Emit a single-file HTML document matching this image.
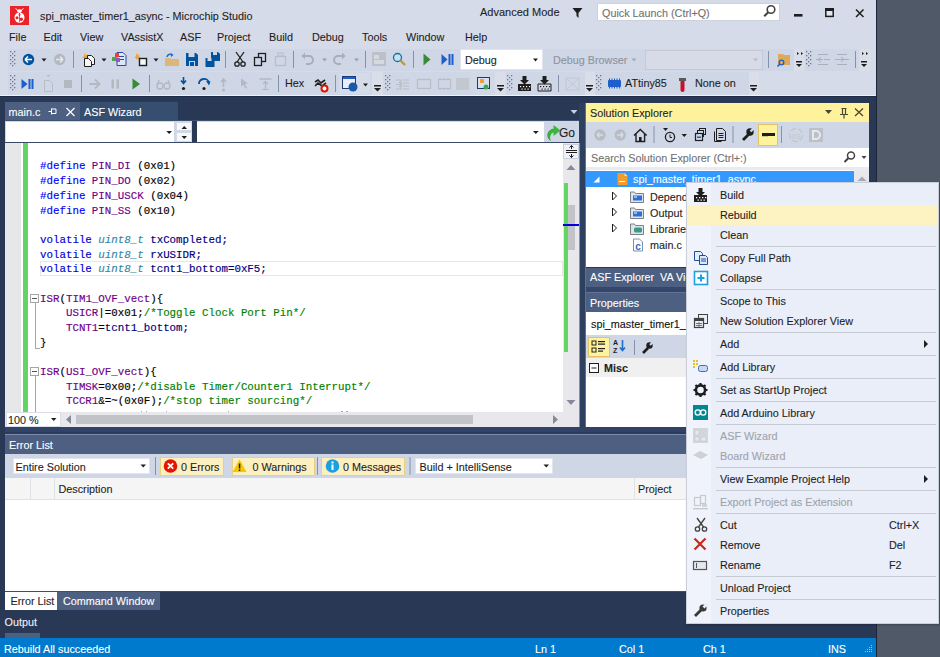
<!DOCTYPE html>
<html><head><meta charset="utf-8">
<style>
*{margin:0;padding:0;box-sizing:border-box}
html,body{width:940px;height:657px;overflow:hidden;background:#4f5967;font-family:"Liberation Sans",sans-serif;font-size:10.8px;color:#1e1e1e}
.a{position:absolute}
.t{position:absolute;white-space:nowrap;line-height:1;-webkit-text-stroke:0.1px}
.k{color:#0000ff}.m{color:#6f008a}.ty{color:#2f86a6;font-style:italic}.kv{color:#0000d8}.v{color:#000080}.c{color:#008000}
.mono{font-family:"Liberation Mono",monospace;font-size:10.8px;-webkit-text-stroke:0.15px}
</style></head><body>
<!-- window chrome -->
<div class="a" style="left:0;top:0;width:876px;height:657px;background:#d6dbe9"></div>
<div class="a" style="left:876px;top:0;width:1px;height:657px;background:#1c2638"></div>
<!-- title -->
<div class="t" style="left:40px;top:11px;font-size:10.8px;color:#1e1e1e">spi_master_timer1_async - Microchip Studio</div>
<div class="t" style="left:480px;top:6.5px;font-size:11px">Advanced Mode</div>
<div class="a" style="left:597px;top:3px;width:183px;height:18px;background:#fff;border:1px solid #cdd1db"></div>
<div class="t" style="left:602px;top:7.5px;color:#717171">Quick Launch (Ctrl+Q)</div>
<!-- menu -->
<div class="t" style="left:9px;top:32px">File</div>
<div class="t" style="left:43.5px;top:32px">Edit</div>
<div class="t" style="left:80px;top:32px">View</div>
<div class="t" style="left:121px;top:32px">VAssistX</div>
<div class="t" style="left:180px;top:32px">ASF</div>
<div class="t" style="left:217px;top:32px">Project</div>
<div class="t" style="left:269px;top:32px">Build</div>
<div class="t" style="left:312px;top:32px">Debug</div>
<div class="t" style="left:362px;top:32px">Tools</div>
<div class="t" style="left:406px;top:32px">Window</div>
<div class="t" style="left:465px;top:32px">Help</div>
<!-- toolbars -->
<svg class="a" style="left:0;top:0" width="940" height="100" viewBox="0 0 940 100">
<defs>
<pattern id="grip" width="4" height="4" patternUnits="userSpaceOnUse"><rect x="0" y="0" width="1" height="1" fill="#6c7689"/><rect x="2" y="2" width="1" height="1" fill="#6c7689"/></pattern>
</defs>
<!-- logo -->
<rect x="10" y="6" width="19" height="19" fill="#e8232a"/>
<ellipse cx="19.5" cy="17.5" rx="5" ry="5.2" fill="#fff"/>
<ellipse cx="19.5" cy="10.8" rx="2.6" ry="1.6" fill="#fff"/>
<circle cx="17" cy="17.8" r="1.5" fill="#e8232a"/><circle cx="21.3" cy="19.3" r="1.7" fill="#e8232a"/><circle cx="19.5" cy="14.8" r="1" fill="#e8232a"/><rect x="19.2" y="13" width=".8" height="9" fill="#e8232a"/>
<path d="M15.5 8.5 L17.5 10 M23.5 8.5 L21.5 10" stroke="#fff" stroke-width="1"/>
<!-- title buttons -->
<path d="M572.5 8 h10 l-4 5 v5 l-2 -2 v-3z" fill="#1e1e1e"/>
<rect x="794" y="14" width="8.5" height="2.6" fill="#1e1e1e"/>
<rect x="825.8" y="8.8" width="7.4" height="7.6" fill="#e4e7ef" stroke="#1e1e1e" stroke-width="1.5"/><rect x="825" y="8" width="9" height="3" fill="#1e1e1e"/>
<path d="M856 9.5 l7.5 7.5 M863.5 9.5 l-7.5 7.5" stroke="#1e1e1e" stroke-width="1.5"/>
<circle cx="771" cy="9.5" r="3.8" fill="none" stroke="#424242" stroke-width="1.6"/><path d="M768.2 12.3 l-4 4" stroke="#424242" stroke-width="2"/>
<!-- toolbar bands row1 -->
<rect x="8" y="49" width="786" height="22" fill="#cfd6e5"/>
<rect x="794" y="49" width="10" height="22" fill="#d9dee9"/>
<rect x="805" y="49" width="54" height="22" fill="#cfd6e5"/>
<rect x="859" y="49" width="12" height="22" fill="#d9dee9"/>
<!-- row2 -->
<rect x="8" y="72" width="364" height="23" fill="#cfd6e5"/>
<rect x="372" y="72" width="11" height="23" fill="#d9dee9"/>
<rect x="383" y="72" width="88" height="23" fill="#cfd6e5"/>
<rect x="471" y="72" width="24" height="23" fill="#d2d8e5"/>
<rect x="495" y="72" width="10" height="23" fill="#d9dee9"/>
<rect x="506" y="72" width="79" height="23" fill="#cfd6e5"/>
<rect x="585" y="72" width="10" height="23" fill="#d9dee9"/>
<rect x="595" y="72" width="154" height="23" fill="#cfd6e5"/>
<rect x="749" y="72" width="10" height="23" fill="#d9dee9"/>
<!-- grippers -->
<g fill="#6c7689"><rect x="10" y="51" width="1.3" height="1.3"/><rect x="14" y="51" width="1.3" height="1.3"/><rect x="12" y="53" width="1.3" height="1.3"/><rect x="10" y="55" width="1.3" height="1.3"/><rect x="14" y="55" width="1.3" height="1.3"/><rect x="12" y="57" width="1.3" height="1.3"/><rect x="10" y="59" width="1.3" height="1.3"/><rect x="14" y="59" width="1.3" height="1.3"/><rect x="12" y="61" width="1.3" height="1.3"/><rect x="10" y="63" width="1.3" height="1.3"/><rect x="14" y="63" width="1.3" height="1.3"/><rect x="12" y="65" width="1.3" height="1.3"/></g>
<g fill="#6c7689"><rect x="10" y="75" width="1.3" height="1.3"/><rect x="14" y="75" width="1.3" height="1.3"/><rect x="12" y="77" width="1.3" height="1.3"/><rect x="10" y="79" width="1.3" height="1.3"/><rect x="14" y="79" width="1.3" height="1.3"/><rect x="12" y="81" width="1.3" height="1.3"/><rect x="10" y="83" width="1.3" height="1.3"/><rect x="14" y="83" width="1.3" height="1.3"/><rect x="12" y="85" width="1.3" height="1.3"/><rect x="10" y="87" width="1.3" height="1.3"/><rect x="14" y="87" width="1.3" height="1.3"/><rect x="12" y="89" width="1.3" height="1.3"/></g>
<g fill="#6c7689"><rect x="385" y="75" width="1.3" height="1.3"/><rect x="389" y="75" width="1.3" height="1.3"/><rect x="387" y="77" width="1.3" height="1.3"/><rect x="385" y="79" width="1.3" height="1.3"/><rect x="389" y="79" width="1.3" height="1.3"/><rect x="387" y="81" width="1.3" height="1.3"/><rect x="385" y="83" width="1.3" height="1.3"/><rect x="389" y="83" width="1.3" height="1.3"/><rect x="387" y="85" width="1.3" height="1.3"/><rect x="385" y="87" width="1.3" height="1.3"/><rect x="389" y="87" width="1.3" height="1.3"/><rect x="387" y="89" width="1.3" height="1.3"/></g>
<g fill="#6c7689"><rect x="507" y="75" width="1.3" height="1.3"/><rect x="511" y="75" width="1.3" height="1.3"/><rect x="509" y="77" width="1.3" height="1.3"/><rect x="507" y="79" width="1.3" height="1.3"/><rect x="511" y="79" width="1.3" height="1.3"/><rect x="509" y="81" width="1.3" height="1.3"/><rect x="507" y="83" width="1.3" height="1.3"/><rect x="511" y="83" width="1.3" height="1.3"/><rect x="509" y="85" width="1.3" height="1.3"/><rect x="507" y="87" width="1.3" height="1.3"/><rect x="511" y="87" width="1.3" height="1.3"/><rect x="509" y="89" width="1.3" height="1.3"/></g>
<g fill="#6c7689"><rect x="596" y="75" width="1.3" height="1.3"/><rect x="600" y="75" width="1.3" height="1.3"/><rect x="598" y="77" width="1.3" height="1.3"/><rect x="596" y="79" width="1.3" height="1.3"/><rect x="600" y="79" width="1.3" height="1.3"/><rect x="598" y="81" width="1.3" height="1.3"/><rect x="596" y="83" width="1.3" height="1.3"/><rect x="600" y="83" width="1.3" height="1.3"/><rect x="598" y="85" width="1.3" height="1.3"/><rect x="596" y="87" width="1.3" height="1.3"/><rect x="600" y="87" width="1.3" height="1.3"/><rect x="598" y="89" width="1.3" height="1.3"/></g>
<g fill="#6c7689"><rect x="806" y="51" width="1.3" height="1.3"/><rect x="810" y="51" width="1.3" height="1.3"/><rect x="808" y="53" width="1.3" height="1.3"/><rect x="806" y="55" width="1.3" height="1.3"/><rect x="810" y="55" width="1.3" height="1.3"/><rect x="808" y="57" width="1.3" height="1.3"/><rect x="806" y="59" width="1.3" height="1.3"/><rect x="810" y="59" width="1.3" height="1.3"/><rect x="808" y="61" width="1.3" height="1.3"/><rect x="806" y="63" width="1.3" height="1.3"/><rect x="810" y="63" width="1.3" height="1.3"/><rect x="808" y="65" width="1.3" height="1.3"/></g>
<!-- separators -->
<g fill="#8592a8">
<rect x="73" y="51" width="1" height="17"/><rect x="225" y="51" width="1" height="17"/><rect x="293" y="51" width="1" height="17"/>
<rect x="365" y="51" width="1" height="17"/><rect x="413" y="51" width="1" height="17"/><rect x="768" y="51" width="1" height="17"/><rect x="855" y="51" width="1" height="17"/>
<rect x="81" y="75" width="1" height="17"/><rect x="149" y="75" width="1" height="17"/><rect x="278" y="75" width="1" height="17"/>
<rect x="335" y="75" width="1" height="17"/><rect x="558" y="75" width="1" height="17"/>
</g>
<!-- overflow glyphs -->
<g fill="#1e1e1e">
<path d="M797 52 l2 1.5 l-2 1.5z M801 52 l2 1.5 l-2 1.5z"/><rect x="796" y="61" width="6" height="1.5"/><path d="M796 64 h6 l-3 3z"/>
<path d="M862 52 l2 1.5 l-2 1.5z M866 52 l2 1.5 l-2 1.5z"/><rect x="861" y="61" width="6" height="1.5"/><path d="M861 64 h6 l-3 3z"/>
<rect x="374" y="85" width="7" height="1.5"/><path d="M374 88 h7 l-3.5 3.5z"/>
<rect x="497" y="85" width="7" height="1.5"/><path d="M497 88 h7 l-3.5 3.5z"/>
<rect x="586" y="85" width="7" height="1.5"/><path d="M586 88 h7 l-3.5 3.5z"/>
<rect x="750" y="85" width="7" height="1.5"/><path d="M750 88 h7 l-3.5 3.5z"/>
</g>
<!-- row1 icons -->
<circle cx="28.5" cy="59.5" r="5.7" fill="#00539c"/><path d="M25 59.5 h7 M25 59.5 l3 -3 M25 59.5 l3 3" stroke="#fff" stroke-width="1.5" fill="none"/>
<path d="M41.5 58.5 h5 l-2.5 3z" fill="#1e1e1e"/>
<circle cx="59.7" cy="59.5" r="5.7" fill="#b4b8c0"/><path d="M63 59.5 h-7 M63 59.5 l-3 -3 M63 59.5 l-3 3" stroke="#e6e8ec" stroke-width="1.5" fill="none"/>
<!-- new project -->
<path d="M84 53 l1.5 2 l2 -1 l-1 2 l2 1.5 l-2 .5 l.5 2 l-1.5 -1.2 l-1.5 1.2 l.3 -2 l-2 -.5 l2 -1.5z" fill="#f0a030"/>
<path d="M87.5 55.5 h4 l3 3 v6 h-7z" fill="#f6f6f6" stroke="#1e1e1e"/><path d="M84.5 58.5 h4 l3 3 v5 h-7z" fill="#f6f6f6" stroke="#1e1e1e"/>
<path d="M101.5 58.5 h5 l-2.5 3z" fill="#1e1e1e"/>
<!-- add item -->
<path d="M117 52.5 h6 l3 3 v10 h-9z" fill="#dde6f5" stroke="#2a4a9a"/><rect x="118" y="56" width="6" height="1" fill="#2a4a9a"/><rect x="118" y="59" width="6" height="1" fill="#2a4a9a"/>
<rect x="115" y="53" width="4" height="4" fill="#e8433a"/><rect x="112" y="57" width="4" height="4" fill="#4aa84a"/><rect x="116" y="58" width="4" height="4" fill="#9a52c8"/>
<!-- new file -->
<path d="M136 53 l1.5 2 l2 -1 l-1 2 l2 1.5 l-2 .5 l.5 2 l-1.5 -1.2 l-1.5 1.2 l.3 -2 l-2 -.5 l2 -1.5z" fill="#f0a030"/>
<rect x="139.5" y="58.5" width="7" height="7" fill="#f6f6f6" stroke="#1e1e1e" stroke-width="1.4"/>
<path d="M153.5 58.5 h5 l-2.5 3z" fill="#1e1e1e"/>
<!-- open -->
<path d="M165 58 h5 l1 1 h8 v7 h-14z" fill="#dcb67a"/><path d="M167 57 a3 3 0 0 1 5 -2" stroke="#1c6dcc" stroke-width="1.5" fill="none"/><path d="M171 53 l2.5 2 l-2.5 2z" fill="#1c6dcc"/>
<!-- save -->
<path d="M186 53 h10 l2 2 v11 h-12z" fill="#00539c"/><rect x="188.5" y="53" width="6" height="4" fill="#cfd6e5"/><rect x="189" y="61" width="6" height="5" fill="#cfd6e5"/><rect x="190" y="62" width="4" height="4" fill="#00539c"/>
<!-- save all -->
<path d="M211 52 h7 l2 2 v7 h-9z" fill="#00539c"/><rect x="213" y="52" width="4" height="3" fill="#cfd6e5"/>
<path d="M205.5 58 h7 l2 2 v7 h-9z" fill="#00539c"/><rect x="207.5" y="58" width="4" height="3" fill="#cfd6e5"/>
<!-- cut -->
<path d="M236 52 l7 10 M244 52 l-7 10" stroke="#1e1e1e" stroke-width="1.3"/><circle cx="237" cy="64" r="2.2" fill="none" stroke="#1e1e1e" stroke-width="1.3"/><circle cx="243" cy="64" r="2.2" fill="none" stroke="#1e1e1e" stroke-width="1.3"/>
<!-- copy -->
<rect x="258.5" y="53.5" width="7" height="8" fill="none" stroke="#1e1e1e" stroke-width="1.3"/><rect x="254.5" y="57.5" width="7" height="8" fill="#cfd6e5" stroke="#1e1e1e" stroke-width="1.3"/>
<!-- paste disabled -->
<rect x="275.5" y="56.5" width="10" height="9" fill="none" stroke="#b9bdc5" stroke-width="1.3"/><rect x="278" y="53" width="5" height="3" fill="none" stroke="#b9bdc5"/>
<!-- undo/redo disabled -->
<path d="M304 56 h5 a4 4 0 0 1 0 8 h-3" stroke="#a9aeb8" stroke-width="2" fill="none"/><path d="M301.5 56 l3.5 -3.5 v7z" fill="#a9aeb8"/>
<path d="M322 58.5 h5 l-2.5 3z" fill="#9aa0aa"/>
<path d="M343 56 h-5 a4 4 0 0 0 0 8 h3" stroke="#a9aeb8" stroke-width="2" fill="none"/><path d="M345.5 56 l-3.5 -3.5 v7z" fill="#a9aeb8"/>
<path d="M354 58.5 h5 l-2.5 3z" fill="#9aa0aa"/>
<!-- gray box -->
<rect x="372" y="52" width="14" height="14" fill="#bcc1c9"/><rect x="374" y="55" width="5" height="4" fill="#d5d9e0"/><rect x="374" y="60" width="10" height="4" fill="#d5d9e0"/>
<!-- find -->
<circle cx="397.5" cy="57.5" r="4" fill="#bfe4f2" stroke="#1e6f9a" stroke-width="1.3"/><path d="M400.5 60.5 l4.5 4.5" stroke="#c8962a" stroke-width="2.4"/>
<!-- play/continue -->
<path d="M423.5 53.5 l7 6 l-7 6z" fill="#388a34"/>
<path d="M441.5 54 l6 5.5 l-6 5.5z" fill="#1c5fcc"/><rect x="448.5" y="54" width="2" height="11" fill="#1c5fcc"/><rect x="451.5" y="54" width="2" height="11" fill="#1c5fcc"/>
<!-- Debug combo -->
<rect x="460.5" y="49.5" width="82" height="20" fill="#fff" stroke="#e0e4ec"/>
<path d="M533 58.5 h5 l-2.5 3z" fill="#1e1e1e"/>
<path d="M631.5 58.5 h5 l-2.5 3z" fill="#a4a9b3"/>
<rect x="645.5" y="50.5" width="117" height="19" fill="#d6dbe7" stroke="#c3c9d6"/>
<path d="M753 58.5 h5 l-2.5 3z" fill="#b8bdc6"/>
<!-- find in files -->
<path d="M778 54 h5 l1 1 h6 v10 h-12z" fill="#dcaa5a"/><circle cx="781.5" cy="62.5" r="2.3" fill="none" stroke="#1c5fcc" stroke-width="1.3"/><path d="M780 64 l-2.5 2.5" stroke="#1c5fcc" stroke-width="1.6"/>
<!-- indent -->
<g stroke="#aab0ba" stroke-width="1"><path d="M818 54.5 h10 M816 59.5 h4 M824 59.5 h6 M818 64.5 h10"/><path d="M823 59.5 h-5 M821 57 l-3 2.5 l3 2.5" fill="none"/>
<path d="M837 54.5 h10 M835 59.5 h4 M843 59.5 h6 M837 64.5 h10"/><path d="M838 59.5 h5 M841 57 l3 2.5 l-3 2.5" fill="none"/></g>
<!-- row2 icons -->
<path d="M21.5 79 l6 5 l-6 5z" fill="#1c5fcc"/><rect x="28.5" y="79" width="2" height="10" fill="#1c5fcc"/><rect x="31.5" y="79" width="2" height="10" fill="#1c5fcc"/>
<path d="M44.5 80.5 h5 l3 3 v8 h-8z" fill="none" stroke="#b9bdc5"/><path d="M46 75 h5 l-2.5 2z" fill="#b9bdc5"/>
<rect x="64" y="80" width="8" height="8" fill="#b4b8c0"/>
<path d="M89.5 84 h10 M95 79.5 l4.5 4.5 l-4.5 4.5" stroke="#b4b8c0" stroke-width="1.8" fill="none"/>
<rect x="111.5" y="79.5" width="2.5" height="9" fill="#b4b8c0"/><rect x="116.5" y="79.5" width="2.5" height="9" fill="#b4b8c0"/>
<path d="M132.5 78.5 l7.5 5.5 l-7.5 5.5z" fill="#388a34"/>
<g fill="none" stroke="#b4b8c0" stroke-width="1.3"><circle cx="160" cy="86" r="3"/><circle cx="167" cy="86" r="3"/><path d="M157 85 l2 -5 M170 85 l-2 -5"/></g>
<path d="M183.5 77 v6 M181 80.5 l2.5 3 l2.5 -3" stroke="#00539c" stroke-width="1.6" fill="none"/><circle cx="183.5" cy="88.5" r="1.6" fill="#1e1e1e"/>
<path d="M199 84 a5 4.5 0 0 1 10 -1" stroke="#00539c" stroke-width="1.8" fill="none"/><path d="M206 81 l4.5 .5 l-1.5 4z" fill="#00539c"/><circle cx="204" cy="88.5" r="1.6" fill="#1e1e1e"/>
<path d="M223.5 87 v-7 M221 82 l2.5 -3 l2.5 3" stroke="#b4b8c0" stroke-width="1.6" fill="none"/><circle cx="223.5" cy="90" r="1.5" fill="#b4b8c0"/>
<path d="M241 78.5 l7 5 l-3 .5 l2 4 l-1.5 .7 l-2 -4 l-2.5 2z" fill="#b4b8c0"/>
<path d="M259.5 79 h12 M265.5 89 v-7 M263 84 l2.5 -2.5 l2.5 2.5" stroke="#b4b8c0" stroke-width="1.3" fill="none"/><rect x="262" y="89" width="7" height="1" fill="#b4b8c0"/>
<!-- breakpoint -->
<path d="M315 82 l3 -2 l3 3 l4 -3 M315 86 l3 -3 l4 3 l4 -3" stroke="#1e1e1e" stroke-width="1.6" fill="none"/><circle cx="324.5" cy="88.5" r="3" fill="#fff" stroke="#e51400" stroke-width="2"/>
<!-- window icon -->
<rect x="339" y="73" width="31" height="21" fill="#d6dbe9"/>
<rect x="342.5" y="76.5" width="13" height="12" fill="#e8eef8" stroke="#1e3a6e"/><rect x="343" y="77" width="12" height="2" fill="#1c5fcc"/><circle cx="353" cy="87" r="4.5" fill="#1a5aa8"/>
<path d="M363 83.5 h5 l-2.5 3z" fill="#1e1e1e"/>
<!-- disabled icons -->
<g fill="none" stroke="#b9bdc5" stroke-width="1.2">
<path d="M396 80 h5 v9 h-5 M396 84.5 h6 M399 82 l3 2.5 l-3 2.5 M403 80 h6 M403 83 h6 M403 86 h6 M403 89 h6"/>
<rect x="417.5" y="79.5" width="13" height="9"/>
<rect x="438.5" y="79.5" width="12" height="9"/><path d="M440 78 v2 M444 78 v2 M448 78 v2 M440 88 v2 M444 88 v2 M448 88 v2"/>
</g>
<rect x="456" y="78" width="13" height="12" fill="#c3c8d0"/>
<rect x="477.5" y="77.5" width="12" height="11" fill="#d5e1f2" stroke="#1e3a6e"/><rect x="480" y="79" width="4" height="4" fill="#f0a030"/><circle cx="486" cy="87" r="2.5" fill="#3aa84a"/>
<!-- program -->
<g fill="#1e1e1e"><path d="M518 84 h13 v7 h-13z"/><path d="M522.5 76 h4 v4 h2.5 l-4.5 4.5 l-4.5 -4.5 h2.5z"/></g>
<g fill="#fff"><rect x="520" y="86" width="1.2" height="1.2"/><rect x="523" y="86" width="1.2" height="1.2"/><rect x="526" y="86" width="1.2" height="1.2"/><rect x="529" y="86" width="1.2" height="1.2"/><rect x="521.5" y="88.5" width="1.2" height="1.2"/><rect x="524.5" y="88.5" width="1.2" height="1.2"/><rect x="527.5" y="88.5" width="1.2" height="1.2"/></g>
<g fill="#1e1e1e"><path d="M538 84 h13 v7 h-13z" fill="none" stroke="#1e1e1e"/><path d="M542.5 76 h4 v4 h2.5 l-4.5 4.5 l-4.5 -4.5 h2.5z"/></g>
<g fill="#1e1e1e"><rect x="540" y="86" width="1.2" height="1.2"/><rect x="543" y="86" width="1.2" height="1.2"/><rect x="546" y="86" width="1.2" height="1.2"/><rect x="549" y="86" width="1.2" height="1.2"/><rect x="541.5" y="88.5" width="1.2" height="1.2"/><rect x="544.5" y="88.5" width="1.2" height="1.2"/><rect x="547.5" y="88.5" width="1.2" height="1.2"/></g>
<rect x="566" y="78" width="13" height="12" fill="none" stroke="#c3c8d0"/><path d="M567 79 l11 10 M578 79 l-11 10" stroke="#c3c8d0"/>
<!-- chip -->
<rect x="608" y="80" width="13" height="7" rx="1" fill="#1c5fcc"/><g fill="#1c5fcc"><rect x="609" y="78.5" width="1" height="10"/><rect x="611.5" y="78.5" width="1" height="10"/><rect x="614" y="78.5" width="1" height="10"/><rect x="616.5" y="78.5" width="1" height="10"/><rect x="619" y="78.5" width="1" height="10"/></g>
<!-- tool icon -->
<path d="M679 78 h7 v3 h-7z" fill="#5a5a5a"/><path d="M680.5 81 h4 v9 a2 2 0 0 1 -4 0z" fill="#c8102e"/>
</svg>
<div class="t" style="left:465px;top:54.5px">Debug</div>
<div class="t" style="left:553px;top:54.5px;color:#8d939e">Debug Browser</div>
<div class="t" style="left:285px;top:78px">Hex</div>
<div class="t" style="left:625px;top:78px">ATtiny85</div>
<div class="t" style="left:695px;top:78px">None on</div>
<!-- dark env -->
<div class="a" style="left:0;top:96px;width:876px;height:542px;background:#293955"></div>
<!-- status bar -->
<div class="a" style="left:0;top:638px;width:876px;height:19px;background:#007acc"></div>
<div class="t" style="left:4px;top:644px;color:#fff">Rebuild All succeeded</div>
<div class="t" style="left:535px;top:644px;color:#fff">Ln 1</div>
<div class="t" style="left:619px;top:644px;color:#fff">Col 1</div>
<div class="t" style="left:703px;top:644px;color:#fff">Ch 1</div>
<div class="t" style="left:828px;top:644px;color:#fff">INS</div>
<svg class="a" style="left:0;top:0" width="940" height="657"><g fill="#9fc8ea"><rect x="871" y="645" width="1" height="1"/><rect x="869" y="647" width="1" height="1"/><rect x="871" y="647" width="1" height="1"/><rect x="867" y="649" width="1" height="1"/><rect x="869" y="649" width="1" height="1"/><rect x="871" y="649" width="1" height="1"/><rect x="865" y="651" width="1" height="1"/><rect x="867" y="651" width="1" height="1"/><rect x="869" y="651" width="1" height="1"/><rect x="871" y="651" width="1" height="1"/></g></svg>
<!-- doc tabs -->
<div class="a" style="left:0;top:95px;width:876px;height:1px;background:#eef1f9"></div><div class="a" style="left:0;top:96px;width:876px;height:1px;background:#1f2c48"></div>
<div class="a" style="left:5px;top:102px;width:75px;height:18px;background:#4d6082"></div>
<div class="t" style="left:8.5px;top:107px;color:#fff">main.c</div>
<div class="a" style="left:80px;top:102px;width:98px;height:18px;background:#364e6f"></div>
<div class="t" style="left:84px;top:107px;color:#fff">ASF Wizard</div>
<div class="a" style="left:5px;top:120px;width:574px;height:1px;background:#3e5272"></div>
<!-- nav bar -->
<div class="a" style="left:5px;top:121px;width:574px;height:21px;background:#cfd6e5"></div>
<div class="a" style="left:6px;top:122px;width:168px;height:19.5px;background:#fff"></div>
<div class="a" style="left:176px;top:122px;width:15.5px;height:9px;background:#f6f8fc;border:1px solid #d3d9e6"></div>
<div class="a" style="left:176px;top:131.5px;width:15.5px;height:10px;background:#f6f8fc;border:1px solid #d3d9e6"></div>
<div class="a" style="left:192px;top:121px;width:4.5px;height:22px;background:#293955"></div>
<div class="a" style="left:197px;top:122px;width:347px;height:19.5px;background:#fff"></div>
<div class="a" style="left:5px;top:141.5px;width:574px;height:1.5px;background:#3a4a66"></div>
<div class="t" style="left:559px;top:126.5px;font-size:12px;color:#1e1e1e">Go</div>
<svg class="a" style="left:0;top:0" width="940" height="200">
<path d="M570.5 110 h7 l-3.5 4z" fill="#c9d0dd"/>
<path d="M48.5 111.5 h3 M51.5 108.5 v6 M51.5 109 h4.5 v4.5 h-4.5" stroke="#fff" fill="none"/>
<path d="M66.5 108 l8 8 M74.5 108 l-8 8" stroke="#fff" stroke-width="1.2"/>
<path d="M166.3 131 h5.7 l-2.85 3z" fill="#1e1e1e"/>
<path d="M181.5 129 h5.5 l-2.75 -3z" fill="#1e1e1e"/>
<path d="M181.5 136 h5.5 l-2.75 3z" fill="#1e1e1e"/>
<path d="M533 131 h5.7 l-2.85 3z" fill="#1e1e1e"/>
<path d="M550.5 140.5 c-4 -3 -4 -10 3 -11.5 v-4 l7 5.5 l-7 5.5 v-3.5 c-3 1 -4 4 -3 8z" fill="#3cb53c"/><path d="M550.5 140.5 c-4 -3 -4 -10 3 -11.5" stroke="#2a8f2a" fill="none" stroke-width=".8"/>

</svg>
<!-- editor -->
<div class="a" style="left:5px;top:143px;width:574px;height:284px;background:#fff"></div>
<div class="a" style="left:5px;top:143px;width:16px;height:269px;background:#e6e7e8"></div>
<div class="a" style="left:23px;top:143px;width:5px;height:269px;background:#63d563"></div>
<div class="a" style="left:40px;top:261px;width:523px;height:15px;border:1px solid #e6e6e6"></div>
<div class="a" style="left:30px;top:294px;width:9px;height:9px;border:1px solid #a5a5a5;background:#fff"></div>
<div class="a" style="left:32px;top:298px;width:5px;height:1px;background:#555"></div>
<div class="a" style="left:35px;top:303px;width:1px;height:46px;background:#a5a5a5"></div>
<div class="a" style="left:35px;top:348px;width:5px;height:1px;background:#a5a5a5"></div>
<div class="a" style="left:30px;top:367px;width:9px;height:9px;border:1px solid #a5a5a5;background:#fff"></div>
<div class="a" style="left:32px;top:371px;width:5px;height:1px;background:#555"></div>
<div class="a" style="left:35px;top:376px;width:1px;height:36px;background:#a5a5a5"></div>
<div class="a" style="left:32px;top:143px;width:531px;height:269px;overflow:hidden">
<pre class="mono" id="code" style="position:absolute;left:8px;top:1.8px;line-height:14.69px;color:#000">

<span class="k">#define</span> <span class="m">PIN_DI</span> (0x01)
<span class="k">#define</span> <span class="m">PIN_DO</span> (0x02)
<span class="k">#define</span> <span class="m">PIN_USCK</span> (0x04)
<span class="k">#define</span> <span class="m">PIN_SS</span> (0x10)

<span class="kv">volatile</span> <span class="ty">uint8_t</span> <span class="v">txCompleted;</span>
<span class="kv">volatile</span> <span class="ty">uint8_t</span> <span class="v">rxUSIDR;</span>
<span class="kv">volatile</span> <span class="ty">uint8_t</span> <span class="v">tcnt1_bottom=0xF5;</span>

<span class="m">ISR</span>(<span class="m">TIM1_OVF_vect</span>){
    <span class="m">USICR</span>|=0x01;<span class="c">/*Toggle Clock Port Pin*/</span>
    <span class="m">TCNT1</span>=<span class="v">tcnt1_bottom;</span>
}

<span class="m">ISR</span>(<span class="m">USI_OVF_vect</span>){
    <span class="m">TIMSK</span>=0x00;<span class="c">/*disable Timer/Counter1 Interrupt*/</span>
    <span class="m">TCCR1</span>&amp;=~(0x0F);<span class="c">/*stop timer sourcing*/</span>
</pre></div>
<div class="a" style="left:563px;top:143px;width:16px;height:269px;background:#e8e8ec"></div>
<div class="a" style="left:563px;top:144px;width:16px;height:15px;background:#eef1f8;border:1px solid #c9d0dc"></div>
<svg class="a" style="left:0;top:0" width="940" height="200"><path d="M566 150.5 h11 M566 152.5 h11" stroke="#1e1e1e"/><path d="M571.5 145.5 v3.5 M571.5 154 v3.5 M569.5 147.5 l2 -2 l2 2 M569.5 155.5 l2 2 l2 -2" stroke="#1e1e1e" fill="none"/></svg>
<div class="a" style="left:564px;top:183px;width:4px;height:169px;background:#63d563"></div>
<div class="a" style="left:568px;top:205px;width:7px;height:45px;background:#c2c3c9"></div>
<div class="a" style="left:563px;top:224px;width:16px;height:2px;background:#0000dd"></div>
<div class="a" style="left:5px;top:412px;width:574px;height:15px;background:#e8e8ec"></div>
<div class="a" style="left:6px;top:412px;width:55px;height:15px;background:#fff;border:1px solid #dadde6"></div>
<div class="t" style="left:8px;top:415px;font-size:10.8px">100 %</div>
<svg class="a" style="left:0;top:0" width="940" height="657">
<path d="M51 418 h5.5 l-2.75 3z" fill="#1e1e1e"/>
<path d="M71 415 v9 l-5 -4.5z" fill="#868999"/>
<path d="M553 415 v9 l5 -4.5z" fill="#868999"/>
<path d="M566.5 170 h9 l-4.5 -5z" fill="#868999"/>
<path d="M566.5 400 h9 l-4.5 5z" fill="#868999"/>
<g fill="#7fc88a"><rect x="141" y="411" width="1" height="1"/><rect x="146" y="411" width="1" height="1"/><rect x="166" y="411" width="1" height="1"/><rect x="228" y="411" width="1" height="1"/><rect x="341" y="411" width="2" height="1"/><rect x="346" y="411" width="2" height="1"/></g>
</svg>
<div class="a" style="left:76px;top:415px;width:397px;height:9px;background:#c2c3c9"></div>

<!-- splitters -->
<div class="a" style="left:579px;top:103px;width:7px;height:325px;background:#2e405f"></div>
<div class="a" style="left:579px;top:143px;width:1px;height:285px;background:#7f8fb0"></div>
<div class="a" style="left:585px;top:103px;width:1px;height:325px;background:#5f7096"></div>
<div class="a" style="left:5px;top:427px;width:864px;height:5px;background:#304366"></div>
<div class="a" style="left:5px;top:432px;width:864px;height:2px;background:#2b3b5a"></div>
<div class="a" style="left:5px;top:434px;width:864px;height:1px;background:#7c8db0"></div>
<!-- solution explorer -->
<div class="a" style="left:586px;top:103px;width:283px;height:19px;background:#fff29d"></div>
<div class="t" style="left:590px;top:107.5px">Solution Explorer</div>
<div class="a" style="left:586px;top:122px;width:283px;height:26px;background:#cfd6e5"></div>
<div class="a" style="left:758px;top:124px;width:20px;height:22px;background:#fff29d;border:1px solid #e5c365"></div>
<div class="a" style="left:586px;top:148px;width:283px;height:19px;background:#fff"></div>
<div class="t" style="left:591px;top:152.5px;color:#717171">Search Solution Explorer (Ctrl+:)</div>
<div class="a" style="left:586px;top:167px;width:283px;height:3px;background:#e8ebf2"></div>
<div class="a" style="left:586px;top:170px;width:283px;height:97px;background:#fff"></div>
<div class="a" style="left:586px;top:171px;width:268px;height:16px;background:#3399ff"></div>
<div class="a" style="left:854px;top:170px;width:15px;height:97px;background:#e8e8ec"></div>
<div class="t" style="left:633px;top:174px;color:#fff">spi_master_timer1_async</div>
<div class="t" style="left:650px;top:191.5px">Dependencies</div>
<div class="t" style="left:650px;top:207.7px">Output Files</div>
<div class="t" style="left:650px;top:224px">Libraries</div>
<div class="t" style="left:650px;top:240.3px">main.c</div>
<!-- ASF explorer tabs -->
<div class="a" style="left:586px;top:286px;width:283px;height:6px;background:#34476a"></div>
<div class="a" style="left:586px;top:268px;width:283px;height:18.5px;background:#4d6082"></div>
<div class="t" style="left:590px;top:272.3px;color:#fff">ASF Explorer</div>
<div class="t" style="left:660px;top:272.3px;color:#fff">VA View</div>
<!-- properties -->
<div class="a" style="left:586px;top:292px;width:283px;height:20px;background:#4d6082;border-top:1px solid #62739a"></div>
<div class="t" style="left:590px;top:298px;color:#fff">Properties</div>
<div class="a" style="left:586px;top:312px;width:283px;height:115px;background:#fff"></div>
<div class="t" style="left:591px;top:318.5px;color:#111">spi_master_timer1_async&nbsp; Project Properties</div>
<div class="a" style="left:586px;top:335px;width:283px;height:23px;background:#cfd6e5"></div>
<div class="a" style="left:588px;top:337px;width:22px;height:20px;background:#fff29d;border:1px solid #e5c365"></div>
<div class="a" style="left:586px;top:358px;width:283px;height:19px;background:#f0f0f0"></div>
<div class="t" style="left:604px;top:363px;font-weight:bold">Misc</div>
<svg class="a" style="left:0;top:0" width="940" height="657">
<path d="M825 110 h7 l-3.5 4z" fill="#4a4733"/>
<path d="M841.5 108.5 h5 M842.5 108.5 v6 M845.5 108.5 v6 M840 114.5 h8 M844 114.5 v4" stroke="#4a4733" stroke-width="1.2" fill="none"/>
<path d="M855 108.5 l8 7.5 M863 108.5 l-8 7.5" stroke="#4a4733" stroke-width="1.3"/>
<circle cx="600" cy="135" r="5.7" fill="#b8bcc4"/><path d="M597 135 h6 M597 135 l2.5 -2.5 M597 135 l2.5 2.5" stroke="#d9dde5" stroke-width="1.3" fill="none"/>
<circle cx="620.3" cy="135" r="5.7" fill="#b8bcc4"/><path d="M623.3 135 h-6 M623.3 135 l-2.5 -2.5 M623.3 135 l-2.5 2.5" stroke="#d9dde5" stroke-width="1.3" fill="none"/>
<path d="M634 135.5 l6.3 -6 l6.3 6 M636 134 v7.5 h8.6 v-7.5" stroke="#1e1e1e" stroke-width="1.4" fill="none"/><rect x="639" y="137" width="2.6" height="4.5" fill="#1e1e1e"/>
<rect x="653.5" y="126" width="1" height="17" fill="#8592a8"/>
<circle cx="670" cy="137" r="4.6" fill="none" stroke="#1e1e1e" stroke-width="1.3"/><path d="M670 134.5 v3 h2" stroke="#1e1e1e" fill="none"/><path d="M663 128 h5 l-2.5 3z" fill="#1e1e1e"/>
<path d="M681.5 134 h5.5 l-2.75 3z" fill="#1e1e1e"/>
<rect x="699.5" y="128.5" width="6" height="6" fill="none" stroke="#1e1e1e"/><rect x="697.5" y="130.5" width="6" height="6" fill="#cfd6e5" stroke="#1e1e1e"/><rect x="695.5" y="133.5" width="7" height="7" fill="#cfd6e5" stroke="#1e1e1e" stroke-width="1.2"/><rect x="697" y="136.5" width="4" height="1.5" fill="#1c5fcc"/>
<path d="M716.5 128.5 h6 l3 3 v9 h-9z" fill="#cfd6e5" stroke="#1e1e1e"/><path d="M714.5 131.5 v10 h7" stroke="#1e1e1e" fill="none"/><path d="M718.5 133.5 h5 M718.5 135.5 h5 M718.5 137.5 h5" stroke="#1e1e1e"/>
<rect x="732.5" y="126" width="1" height="17" fill="#8592a8"/>
<path d="M743 140 l6 -6" stroke="#1e1e1e" stroke-width="2.8"/><circle cx="750" cy="132" r="3.7" fill="#1e1e1e"/><path d="M750.5 131.5 l4 -4" stroke="#cfd6e5" stroke-width="2.4"/>
<rect x="762" y="133" width="13" height="3" fill="#1e1e1e"/><rect x="762" y="135" width="6" height="1.2" fill="#1e1e1e"/>
<rect x="781" y="126" width="1" height="17" fill="#8592a8"/>
<circle cx="796" cy="135" r="6.5" fill="none" stroke="#c4c8cf" stroke-width="1.4" stroke-dasharray="6 2"/><text x="791" y="139" font-size="8" fill="#c4c8cf" font-family="Liberation Sans">4S</text>
<rect x="809" y="128" width="14" height="14" fill="#bcc0c8"/><path d="M812 130 h4 a5 5 0 0 1 0 10 h-4z" fill="#e6e8ec"/><path d="M814 132 h2 a3 3 0 0 1 0 6 h-2z" fill="#bcc0c8"/>
<circle cx="851" cy="155.5" r="3.5" fill="none" stroke="#424242" stroke-width="1.5"/><path d="M848.5 158 l-4 4" stroke="#424242" stroke-width="2"/>
<path d="M861.5 156 h5 l-2.5 3z" fill="#424242"/>
<path d="M862 176.5 l-4.5 4.5 h9z" fill="#a6a9b0"/>
<!-- tree -->
<path d="M599.5 176.5 v6 h-6z" fill="#fff"/>
<path d="M617.5 173 h7 l3 3 v9 h-10z" fill="#f39c2c"/><path d="M624.5 173 v3 h3" fill="#fcd9a8"/><rect x="619" y="181" width="6" height="1" fill="#fff"/>
<g transform="translate(0,1.5)"><path d="M612.5 190.5 l4 4 l-4 4z" fill="#fff" stroke="#1e1e1e"/>
<path d="M612.5 206.5 l4 4 l-4 4z" fill="#fff" stroke="#1e1e1e"/>
<path d="M612.5 222.5 l4 4 l-4 4z" fill="#fff" stroke="#1e1e1e"/>
<g>
<path d="M630.5 190.5 h4 l1 1.5 h8 v9 h-13z" fill="#dfe3ea" stroke="#7a7f88"/><rect x="633" y="194" width="9" height="5" fill="#2d6fd2"/><rect x="634" y="195" width="3" height="1" fill="#fff"/>
<path d="M630.5 206.5 h4 l1 1.5 h8 v9 h-13z" fill="#dfe3ea" stroke="#7a7f88"/><rect x="633" y="210" width="9" height="5" fill="#2d6fd2"/><rect x="634" y="211" width="3" height="1" fill="#fff"/>
<path d="M630.5 222.5 h4 l1 1.5 h8 v9 h-13z" fill="#dfe3ea" stroke="#7a7f88"/><rect x="634" y="226" width="8" height="5" rx="1.5" fill="#3a9a8a"/>
</g>
<path d="M633.5 237.5 h6 l3 3 v9 h-9z" fill="#fff" stroke="#7a8fb0"/><text x="635.2" y="248.5" font-size="10" font-weight="bold" fill="#2a6fc9" font-family="Liberation Sans">c</text>
</g>
<!-- properties toolbar -->
<g fill="#1e1e1e"><rect x="592" y="341" width="4" height="4" fill="none" stroke="#1e1e1e"/><rect x="592" y="348" width="4" height="4" fill="none" stroke="#1e1e1e"/><rect x="598" y="341" width="7" height="1.2"/><rect x="598" y="343.5" width="7" height="1.2"/><rect x="598" y="348" width="7" height="1.2"/><rect x="598" y="350.5" width="5" height="1.2"/></g>
<text x="613" y="345" font-size="7" font-weight="bold" fill="#1e1e1e" font-family="Liberation Sans">A</text><text x="613" y="353" font-size="7" font-weight="bold" fill="#1e1e1e" font-family="Liberation Sans">Z</text>
<path d="M622.5 340 v10 M620 347.5 l2.5 3 l2.5 -3" stroke="#1c6dcc" stroke-width="1.6" fill="none"/>
<rect x="634" y="340" width="1" height="15" fill="#8592a8"/>
<path d="M643 353 l5 -5" stroke="#1e1e1e" stroke-width="2.6"/><circle cx="649.5" cy="345.5" r="3.2" fill="#1e1e1e"/><path d="M650 345 l3.5 -3.5" stroke="#cfd6e5" stroke-width="2.2"/>
<rect x="589.5" y="363.5" width="9" height="9" fill="#fff" stroke="#1e1e1e"/><rect x="591.5" y="367.5" width="5" height="1" fill="#1e1e1e"/>
</svg>
<!-- error list -->
<div class="a" style="left:5px;top:435px;width:864px;height:19px;background:#4d6082"></div>
<div class="t" style="left:9px;top:439.5px;color:#fff">Error List</div>
<div class="a" style="left:5px;top:454px;width:864px;height:24px;background:#cfd6e5"></div>
<div class="a" style="left:12.5px;top:458px;width:137px;height:16px;background:#fff;border:1px solid #e2e5ec"></div>
<div class="t" style="left:15.5px;top:461.5px">Entire Solution</div>
<div class="a" style="left:160px;top:456.5px;width:64px;height:19.5px;background:#fdf0c0;border:1px solid #e8cf83"></div>
<div class="t" style="left:181px;top:461.5px">0 Errors</div>
<div class="a" style="left:231.5px;top:456.5px;width:83px;height:19.5px;background:#fdf0c0;border:1px solid #e8cf83"></div>
<div class="t" style="left:252.5px;top:461.5px">0 Warnings</div>
<div class="a" style="left:321px;top:456.5px;width:84px;height:19.5px;background:#fdf0c0;border:1px solid #e8cf83"></div>
<div class="t" style="left:343px;top:461.5px">0 Messages</div>
<div class="a" style="left:415px;top:458px;width:138px;height:16px;background:#fff;border:1px solid #e2e5ec"></div>
<div class="t" style="left:419.5px;top:461.5px">Build + IntelliSense</div>
<div class="a" style="left:5px;top:478px;width:864px;height:113px;background:#fff"></div><div class="a" style="left:5px;top:591px;width:864px;height:1px;background:#3c4d6d"></div>
<div class="a" style="left:5px;top:478px;width:864px;height:22px;background:#f5f5f5;border-bottom:1px solid #dfe1e6"></div>
<div class="a" style="left:30px;top:478px;width:1px;height:22px;background:#e0e2e7"></div>
<div class="a" style="left:54px;top:478px;width:1px;height:22px;background:#e0e2e7"></div>
<div class="a" style="left:634px;top:478px;width:1px;height:22px;background:#e0e2e7"></div>
<div class="t" style="left:58.5px;top:484px">Description</div>
<div class="t" style="left:638px;top:484px">Project</div>
<div class="a" style="left:5px;top:592px;width:52px;height:18px;background:#fff"></div>
<div class="t" style="left:10.5px;top:595.5px">Error List</div>
<div class="a" style="left:57px;top:592px;width:103px;height:18px;background:#4d6082"></div>
<div class="t" style="left:63px;top:595.5px;color:#fff">Command Window</div>
<div class="t" style="left:4.5px;top:617px;color:#f0f0f0">Output</div>
<div class="a" style="left:5px;top:633px;width:35px;height:5px;background:#4d6082"></div>
<svg class="a" style="left:0;top:0" width="940" height="657">
<path d="M140.5 464.5 h5.5 l-2.75 3z" fill="#1e1e1e"/>
<path d="M543.5 464.5 h5.5 l-2.75 3z" fill="#1e1e1e"/>
<rect x="155" y="457" width="1" height="18" fill="#8592a8"/><rect x="317" y="457" width="1" height="18" fill="#8592a8"/><rect x="409.5" y="457" width="1" height="18" fill="#8592a8"/>
<circle cx="170.5" cy="466" r="6.8" fill="#e51400"/><path d="M167.8 463.3 l5.4 5.4 M173.2 463.3 l-5.4 5.4" stroke="#fff" stroke-width="1.8"/>
<path d="M239.5 459.5 l7 12.5 h-14z" fill="#f7c600"/><rect x="238.8" y="463.5" width="1.5" height="5" fill="#1e1e1e"/><rect x="238.8" y="469.5" width="1.5" height="1.5" fill="#1e1e1e"/>
<circle cx="332.5" cy="466" r="6.8" fill="#1ba1e2"/><rect x="331.5" y="464.5" width="2" height="5.5" fill="#fff"/><rect x="331.5" y="461.5" width="2" height="2" fill="#fff"/>
</svg>
<!-- context menu -->
<div class="a" style="left:686px;top:182px;width:253px;height:442px;background:#e9eef9;border:1px solid #c9ced9;box-shadow:1px 1px 2px rgba(0,0,0,.25)"></div>
<div class="a" style="left:687px;top:183px;width:24px;height:440px;background:#f0f3fb"></div>
<div class="t" style="left:720px;top:190px;color:#1e1e1e">Build</div>
<div class="a" style="left:687px;top:205px;width:250px;height:20px;background:#fdf3c2"></div>
<div class="t" style="left:720px;top:210px;color:#1e1e1e">Rebuild</div>
<div class="t" style="left:720px;top:230px;color:#1e1e1e">Clean</div>
<div class="a" style="left:716px;top:246px;width:220px;height:1px;background:#c6cad3"></div>
<div class="t" style="left:720px;top:253px;color:#1e1e1e">Copy Full Path</div>
<div class="t" style="left:720px;top:273px;color:#1e1e1e">Collapse</div>
<div class="a" style="left:716px;top:289px;width:220px;height:1px;background:#c6cad3"></div>
<div class="t" style="left:720px;top:296px;color:#1e1e1e">Scope to This</div>
<div class="t" style="left:720px;top:316px;color:#1e1e1e">New Solution Explorer View</div>
<div class="a" style="left:716px;top:332px;width:220px;height:1px;background:#c6cad3"></div>
<div class="t" style="left:720px;top:339px;color:#1e1e1e">Add</div>
<div class="a" style="left:716px;top:355px;width:220px;height:1px;background:#c6cad3"></div>
<div class="t" style="left:720px;top:362px;color:#1e1e1e">Add Library</div>
<div class="a" style="left:716px;top:378px;width:220px;height:1px;background:#c6cad3"></div>
<div class="t" style="left:720px;top:385px;color:#1e1e1e">Set as StartUp Project</div>
<div class="a" style="left:716px;top:401px;width:220px;height:1px;background:#c6cad3"></div>
<div class="t" style="left:720px;top:408px;color:#1e1e1e">Add Arduino Library</div>
<div class="a" style="left:716px;top:424px;width:220px;height:1px;background:#c6cad3"></div>
<div class="t" style="left:720px;top:431px;color:#a0a3a9">ASF Wizard</div>
<div class="t" style="left:720px;top:451px;color:#a0a3a9">Board Wizard</div>
<div class="a" style="left:716px;top:467px;width:220px;height:1px;background:#c6cad3"></div>
<div class="t" style="left:720px;top:474px;color:#1e1e1e">View Example Project Help</div>
<div class="a" style="left:716px;top:490px;width:220px;height:1px;background:#c6cad3"></div>
<div class="t" style="left:720px;top:497px;color:#a0a3a9">Export Project as Extension</div>
<div class="a" style="left:716px;top:513px;width:220px;height:1px;background:#c6cad3"></div>
<div class="t" style="left:720px;top:520px;color:#1e1e1e">Cut</div>
<div class="t" style="left:889px;top:520px;color:#1e1e1e">Ctrl+X</div>
<div class="t" style="left:720px;top:540px;color:#1e1e1e">Remove</div>
<div class="t" style="left:889px;top:540px;color:#1e1e1e">Del</div>
<div class="t" style="left:720px;top:560px;color:#1e1e1e">Rename</div>
<div class="t" style="left:889px;top:560px;color:#1e1e1e">F2</div>
<div class="a" style="left:716px;top:576px;width:220px;height:1px;background:#c6cad3"></div>
<div class="t" style="left:720px;top:583px;color:#1e1e1e">Unload Project</div>
<div class="a" style="left:716px;top:599px;width:220px;height:1px;background:#c6cad3"></div>
<div class="t" style="left:720px;top:606px;color:#1e1e1e">Properties</div>
<svg class="a" style="left:0;top:0" width="940" height="657"><g fill="#1e1e1e"><path d="M694 195 h13 v7 h-13z"/><path d="M698.5 188 h4 v4 h2.5 l-4.5 4.5 l-4.5 -4.5 h2.5z"/></g><g fill="#fff"><rect x="696" y="197" width="1.3" height="1.3"/><rect x="699" y="197" width="1.3" height="1.3"/><rect x="702" y="197" width="1.3" height="1.3"/><rect x="705" y="197" width="1.3" height="1.3"/><rect x="697.5" y="199.5" width="1.3" height="1.3"/><rect x="700.5" y="199.5" width="1.3" height="1.3"/><rect x="703.5" y="199.5" width="1.3" height="1.3"/></g>
<path d="M694.5 251.5 h6 l2 2 v7 h-8z" fill="#e8eef8" stroke="#1c4f9c"/><path d="M699.5 255.5 h6 l2 2 v7 h-8z" fill="#dfe8f6" stroke="#1c4f9c"/><path d="M701 259 h5 M701 261 h5" stroke="#1c4f9c"/>
<rect x="694.5" y="271.5" width="13" height="13" fill="#fff" stroke="#1ba1e2" stroke-width="1.6"/><path d="M701 274.5 v7 M697.5 278 h7" stroke="#1ba1e2" stroke-width="2"/>
<rect x="698.5" y="314.5" width="9" height="9" fill="#e9eef9" stroke="#424242"/><rect x="694.5" y="318.5" width="9" height="9" fill="#e9eef9" stroke="#424242" stroke-width="1.2"/><rect x="695" y="319" width="8" height="2" fill="#424242"/><path d="M696 323.5 h6 M696 325.5 h6 M699 322 v5" stroke="#777"/>
<path d="M924 340 l4 4 l-4 4z" fill="#1e1e1e"/>
<g fill="#e8c020"><rect x="693" y="360" width="2" height="2"/><rect x="696" y="360" width="2" height="2"/><rect x="693" y="363" width="2" height="2"/><rect x="696" y="363" width="2" height="2"/><rect x="693" y="366" width="2" height="2"/></g><rect x="698.5" y="365.5" width="9" height="6" rx="2" fill="#c8d8f0" stroke="#3c6fb4"/>
<circle cx="700.5" cy="390" r="4.6" fill="none" stroke="#1e1e1e" stroke-width="2.6"/><path d="M700.5 383 v3 M700.5 394 v3 M693.5 390 h3 M704.5 390 h3 M695.5 385 l2 2 M703.5 393 l2 2 M705.5 385 l-2 2 M697.5 393 l-2 2" stroke="#1e1e1e" stroke-width="2.2"/>
<rect x="693" y="405" width="15" height="15" fill="#00878f"/><circle cx="697.8" cy="412.5" r="2.6" fill="none" stroke="#fff" stroke-width="1.4"/><circle cx="703.2" cy="412.5" r="2.6" fill="none" stroke="#fff" stroke-width="1.4"/>
<rect x="693" y="428" width="15" height="15" fill="#d3d6dd"/><rect x="695" y="430" width="4" height="5" fill="#e6e8ec" stroke="#c3c6cd" stroke-width=".6"/><rect x="695" y="437" width="4" height="4" fill="#e6e8ec" stroke="#c3c6cd" stroke-width=".6"/><rect x="701" y="437" width="5" height="4" fill="#e6e8ec" stroke="#c3c6cd" stroke-width=".6"/>
<path d="M693 455 l7 -4 l8 4 l-7 4z" fill="#cdd0d6"/>
<path d="M924 475 l4 4 l-4 4z" fill="#1e1e1e"/>
<rect x="694.5" y="497.5" width="6" height="8" fill="none" stroke="#c6c9cf" stroke-width="1.2"/><rect x="700.5" y="495.5" width="5" height="8" fill="none" stroke="#c6c9cf" stroke-width="1.2"/><rect x="693" y="508" width="15" height="1.4" fill="#c6c9cf"/><rect x="702" y="504" width="5" height="3" fill="#d0d3d9"/>
<path d="M697 518 l6.5 9 M705 518 l-6.5 9" stroke="#424242" stroke-width="1.3"/><circle cx="697.5" cy="529" r="2.2" fill="none" stroke="#424242" stroke-width="1.3"/><circle cx="704.5" cy="529" r="2.2" fill="none" stroke="#424242" stroke-width="1.3"/>
<path d="M694.5 538.5 l11 11 M705.5 538.5 l-11 11" stroke="#c42b1c" stroke-width="2.2"/>
<rect x="693.5" y="561.5" width="13" height="8" fill="#e6e8ee" stroke="#555" stroke-width="1.2"/><rect x="696" y="563" width="1" height="5" fill="#555"/>
<path d="M695 616 l6 -6" stroke="#3a3a3a" stroke-width="2.8"/><circle cx="703" cy="608" r="3.6" fill="#3a3a3a"/><path d="M703.5 607.5 l4 -4" stroke="#e9eef9" stroke-width="2.6"/></svg><!--MENUEND-->
</body></html>
